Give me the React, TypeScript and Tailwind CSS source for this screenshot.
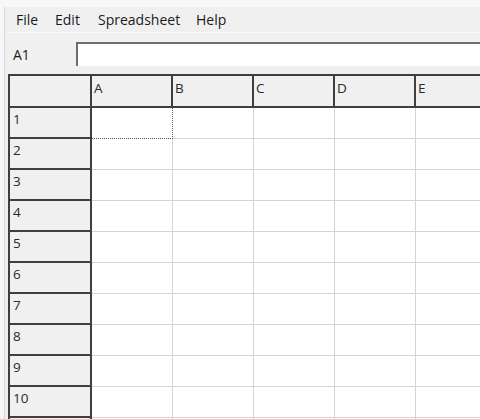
import React from "react";

const COLS = ["A", "B", "C", "D", "E"];
const ROWS = [1, 2, 3, 4, 5, 6, 7, 8, 9, 10];

export default function App() {
  return (
    <div
      className="relative h-[419px] w-[480px] overflow-hidden bg-[#f7f7f7] text-[#1b1b1b]"
      style={{ fontFamily: '"Open Sans", "Noto Sans", sans-serif' }}
    >
      <div className="ml-[4px] mt-[7px] h-[412px] border-l border-[#d6d6d6] bg-[#f0f0f0]">
        {/* menu bar */}
        <div className="flex h-[25px] items-center pl-[11px] text-[14px] leading-none">
          <span className="w-[39px]">File</span>
          <span className="w-[43px]">Edit</span>
          <span className="w-[98px]">Spreadsheet</span>
          <span>Help</span>
        </div>

        {/* cell reference + formula entry */}
        <div className="flex h-[42px] items-center border-t border-[#f8f8f8] pt-[1px]">
          <span className="w-[71px] pl-[8px] text-[14px]">A1</span>
          <div className="h-[24px] flex-1 border-l-2 border-t-2 border-[#6e6e6e] bg-white" />
        </div>

        {/* grid */}
        <div className="ml-[3px] grid w-max grid-cols-[82px_repeat(5,81px)] grid-rows-[32px_repeat(11,31px)] border-l-2 border-t-2 border-[#3f3f3f] text-[13.5px] leading-none text-[#2a2a2a]">
          <div className="border-b-2 border-r-2 border-[#3f3f3f] bg-[#f0f0f0]" />
          {COLS.map((c) => (
            <div
              key={c}
              className="border-b-2 border-r-2 border-[#3f3f3f] bg-[#f0f0f0] pl-[2px] pt-[6px]"
            >
              {c}
            </div>
          ))}
          {ROWS.map((r) => (
            <React.Fragment key={r}>
              <div className="border-b-2 border-r-2 border-[#3f3f3f] bg-[#f0f0f0] pl-[3px] pt-[5px]">
                {r}
              </div>
              {COLS.map((c) => (
                <div
                  key={c}
                  className={
                    r === 1 && c === "A"
                      ? "border-b border-r border-dotted border-[#555555] bg-white"
                      : "border-b border-r border-[#d4d4d4] bg-white"
                  }
                />
              ))}
            </React.Fragment>
          ))}
          <div className="border-r-2 border-[#3f3f3f] bg-[#f0f0f0]" />
          {COLS.map((c) => (
            <div key={c} className="border-r border-[#d4d4d4] bg-white" />
          ))}
        </div>
      </div>
    </div>
  );
}
